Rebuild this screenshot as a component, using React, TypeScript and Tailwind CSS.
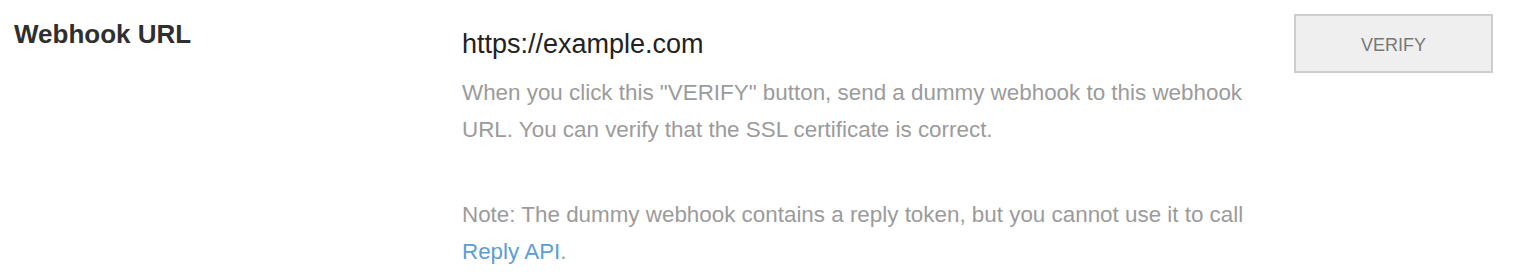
export default function App() {
  return (
    <div className="flex h-[280px] w-full items-start bg-white pl-[14px] font-['Liberation_Sans',Arial,sans-serif]">
      {/* label */}
      <div className="w-[448px] pt-[19px]">
        <h2 className="text-[26px] font-bold leading-[30px] text-[#2f2f2f]">Webhook URL</h2>
      </div>

      {/* value + help text */}
      <div className="w-[800px] pt-[29px]">
        <div className="text-[27px] leading-[30px] text-[#222]">https://example.com</div>
        <p className="mt-[15px] text-[22.4px] leading-[37px] text-[#9b9b9b]">
          When you click this "VERIFY" button, send a dummy webhook to this webhook URL. You can
          verify that the SSL certificate is correct.
        </p>
        <p className="mt-[48px] text-[22.4px] leading-[37px] text-[#9b9b9b]">
          Note: The dummy webhook contains a reply token, but you cannot use it to call{' '}
          <a href="#" className="text-[#5b9dd9]">
            Reply API
          </a>
          .
        </p>
      </div>

      {/* action */}
      <button
        type="button"
        className="ml-auto mr-[27px] mt-[14px] flex h-[59px] w-[199px] items-center justify-center border-2 border-[#cdcdcd] bg-[#efefef] pt-[3px] text-[18px] text-[#777]"
      >
        VERIFY
      </button>
    </div>
  );
}
